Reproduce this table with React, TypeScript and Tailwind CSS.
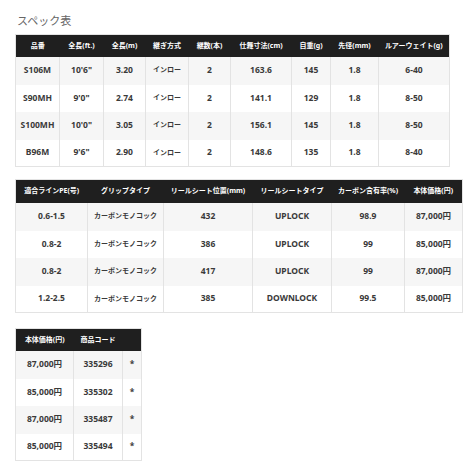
type Table = {
  widths: number[];
  head: string[];
  rows: string[][];
};

const spec: Table = {
  widths: [44, 44, 42, 43, 42, 61, 39, 48, 71],
  head: ["品番", "全長(ft.)", "全長(m)", "継ぎ方式", "継数(本)", "仕舞寸法(cm)", "自重(g)", "先径(mm)", "ルアーウェイト(g)"],
  rows: [
    ["S106M", "10'6\"", "3.20", "インロー", "2", "163.6", "145", "1.8", "6-40"],
    ["S90MH", "9'0\"", "2.74", "インロー", "2", "141.1", "129", "1.8", "8-50"],
    ["S100MH", "10'0\"", "3.05", "インロー", "2", "156.1", "145", "1.8", "8-50"],
    ["B96M", "9'6\"", "2.90", "インロー", "2", "148.6", "135", "1.8", "8-40"],
  ],
};

const reel: Table = {
  widths: [72, 76, 89, 79, 73, 58],
  head: ["適合ラインPE(号)", "グリップタイプ", "リールシート位置(mm)", "リールシートタイプ", "カーボン含有率(%)", "本体価格(円)"],
  rows: [
    ["0.6-1.5", "カーボンモノコック", "432", "UPLOCK", "98.9", "87,000円"],
    ["0.8-2", "カーボンモノコック", "386", "UPLOCK", "99", "85,000円"],
    ["0.8-2", "カーボンモノコック", "417", "UPLOCK", "99", "87,000円"],
    ["1.2-2.5", "カーボンモノコック", "385", "DOWNLOCK", "99.5", "85,000円"],
  ],
};

const price: Table = {
  widths: [58, 49, 19],
  head: ["本体価格(円)", "商品コード", ""],
  rows: [
    ["87,000円", "335296", "*"],
    ["85,000円", "335302", "*"],
    ["87,000円", "335487", "*"],
    ["85,000円", "335494", "*"],
  ],
};

const rowHeights = ["h-[28px]", "h-[27px]", "h-[28px]", "h-[27px]"];

const isKana = (s: string) => /[\u30a0-\u30ff]/.test(s);

function SpecTable({ table, className, headClass }: { table: Table; className?: string; headClass?: string }) {
  const total = table.widths.reduce((a, b) => a + b, 0);
  return (
    <table
      className={"table-fixed border-collapse border border-[#e3e3e3] " + (className ?? "")}
      style={{ width: total }}
    >
      <colgroup>
        {table.widths.map((w, i) => (
          <col key={i} style={{ width: w }} />
        ))}
      </colgroup>
      <thead>
        <tr className={(headClass ?? "h-[22px]") + " bg-[#1f1f1f]"}>
          {table.head.map((h, i) => (
            <th key={i} className="whitespace-nowrap px-0 text-center text-[7px] font-bold text-white">
              {h}
            </th>
          ))}
        </tr>
      </thead>
      <tbody>
        {table.rows.map((row, r) => (
          <tr key={r} className={rowHeights[r] + (r % 2 === 0 ? " bg-[#f6f6f6]" : " bg-white")}>
            {row.map((c, i) => (
              <td
                key={i}
                className={
                  "whitespace-nowrap border-x border-[#e3e3e3] text-center font-bold text-[#3a3a3a] " +
                  (isKana(c) ? "text-[7px]" : "text-[8.5px]")
                }
              >
                {c}
              </td>
            ))}
          </tr>
        ))}
      </tbody>
    </table>
  );
}

export default function App() {
  return (
    <div
      className="h-[474px] w-[474px] bg-white pl-[15px] pt-[13px]"
      style={{ fontFamily: '"Noto Sans", "Noto Sans CJK JP", sans-serif' }}
    >
      <h2 className="pl-[2px] text-[11px] leading-[16px] text-[#666]">スペック表</h2>
      <SpecTable table={spec} className="mt-[5px]" />
      <SpecTable table={reel} className="mt-[12px]" headClass="h-[23px]" />
      <SpecTable table={price} className="mt-[15px]" />
    </div>
  );
}
